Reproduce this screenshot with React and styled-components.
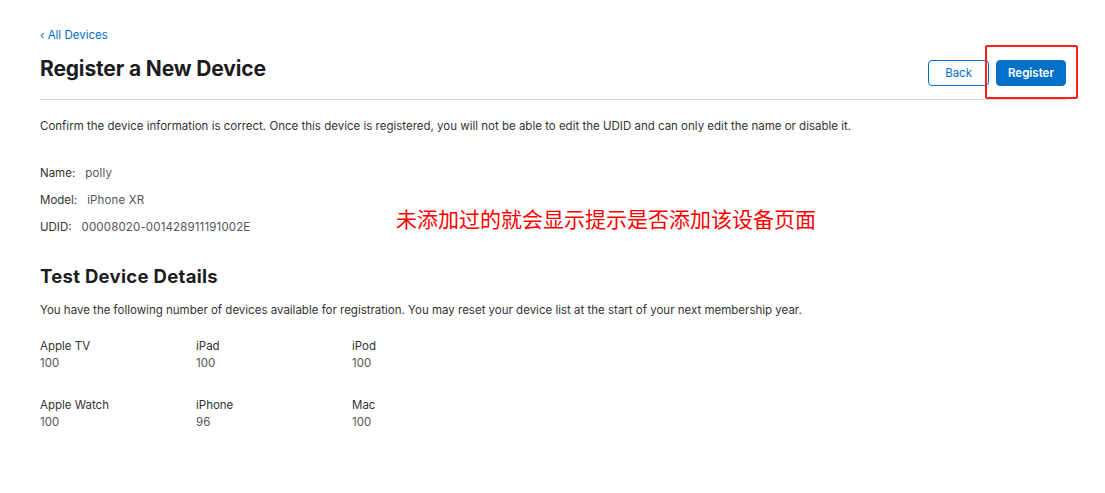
import React from "react";
import styled, { createGlobalStyle } from "styled-components";

const GlobalStyle = createGlobalStyle`
  body {
    margin: 0;
    background: #fff;
    font-family: "Inter", "Liberation Sans", sans-serif;
    color: #333;
  }
`;

const Page = styled.div`
  position: relative;
  width: 1105px;
  height: 493px;
  padding: 23px 39px 0 40px;
  box-sizing: border-box;
`;

const BackLink = styled.a`
  display: inline-block;
  font-size: 11.5px;
  line-height: 16px;
  color: #0070c9;
  text-decoration: none;
  cursor: pointer;
`;

const Header = styled.div`
  display: flex;
  align-items: flex-start;
  justify-content: space-between;
  padding: 11px 0 13px;
  border-bottom: 1px solid #d6d6d6;
`;

const Title = styled.h1`
  margin: 0;
  font-size: 21px;
  font-weight: 700;
  color: #1d1d1f;
  letter-spacing: -0.15px;
  line-height: 30px;
`;

const Btns = styled.div`
  display: flex;
  gap: 7px;
  margin-top: 6px;
`;

const Btn = styled.button`
  height: 26px;
  padding: 0 ${(p) => (p.primary ? "11px" : "16px")};
  border-radius: 4px;
  border: 1px solid #0070c9;
  font-family: inherit;
  font-size: 11.5px;
  font-weight: ${(p) => (p.primary ? 600 : 400)};
  color: ${(p) => (p.primary ? "#fff" : "#0070c9")};
  background: ${(p) => (p.primary ? "#0070c9" : "#fff")};
  cursor: pointer;
`;

const Highlight = styled.div`
  position: absolute;
  left: 985px;
  top: 45px;
  width: 93px;
  height: 54px;
  border: 2.5px solid #ff1f1f;
  border-radius: 2px;
  box-sizing: border-box;
`;

const Note = styled.div`
  position: absolute;
  left: 396px;
  top: 204px;
  font-family: "Noto Sans CJK SC", sans-serif;
  font-size: 21px;
  line-height: 28px;
  color: #ff0000;
`;

const Text = styled.p`
  margin: ${(p) => p.m || "0"};
  font-size: 11.5px;
  line-height: 16px;
  color: #333;
`;

const InfoList = styled.dl`
  display: flex;
  flex-direction: column;
  gap: 10.75px;
  margin: 31px 0 0;
`;

const InfoRow = styled.div`
  display: flex;
  gap: 10px;
  font-size: 11.5px;
  line-height: 16px;
`;

const InfoKey = styled.dt`
  color: #333;
`;

const InfoValue = styled.dd`
  margin: 0;
  color: #555;
  letter-spacing: 0.15px;
`;

const SubTitle = styled.h2`
  margin: 29px 0 14px;
  font-size: 18.5px;
  font-weight: 700;
  color: #1d1d1f;
  line-height: 24px;
  letter-spacing: 0.3px;
`;

const Grid = styled.div`
  display: grid;
  grid-template-columns: repeat(3, 156px);
  row-gap: 26px;
  margin-top: 20px;
`;

const Cell = styled.div`
  display: flex;
  flex-direction: column;
  gap: 1px;
  font-size: 11.5px;
  line-height: 16px;
`;

const CellLabel = styled.span`
  color: #333;
`;

const CellValue = styled.span`
  color: #555;
`;

const info = [
  ["Name:", "polly"],
  ["Model:", "iPhone XR"],
  ["UDID:", "00008020-001428911191002E"],
];

const devices = [
  ["Apple TV", "100"],
  ["iPad", "100"],
  ["iPod", "100"],
  ["Apple Watch", "100"],
  ["iPhone", "96"],
  ["Mac", "100"],
];

export default function App() {
  return (
    <>
      <GlobalStyle />
      <Page>
        <BackLink>‹ All Devices</BackLink>
        <Header>
          <Title>Register a New Device</Title>
          <Btns>
            <Btn>Back</Btn>
            <Btn primary>Register</Btn>
          </Btns>
        </Header>
        <Text m="18px 0 0">
          Confirm the device information is correct. Once this device is registered, you will not be able to edit the
          UDID and can only edit the name or disable it.
        </Text>
        <InfoList>
          {info.map(([k, v]) => (
            <InfoRow key={k}>
              <InfoKey>{k}</InfoKey>
              <InfoValue>{v}</InfoValue>
            </InfoRow>
          ))}
        </InfoList>
        <SubTitle>Test Device Details</SubTitle>
        <Text>
          You have the following number of devices available for registration. You may reset your device list at the
          start of your next membership year.
        </Text>
        <Grid>
          {devices.map(([name, count]) => (
            <Cell key={name}>
              <CellLabel>{name}</CellLabel>
              <CellValue>{count}</CellValue>
            </Cell>
          ))}
        </Grid>
        <Highlight />
        <Note>未添加过的就会显示提示是否添加该设备页面</Note>
      </Page>
    </>
  );
}
